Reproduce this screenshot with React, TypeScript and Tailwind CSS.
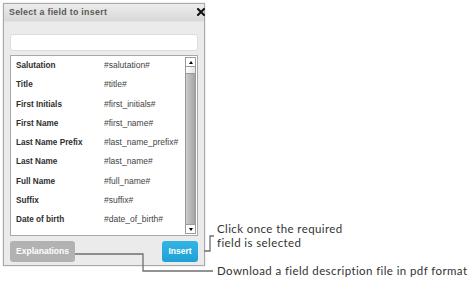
import { useState } from 'react';

const fields = [
  { label: 'Salutation', code: '#salutation#' },
  { label: 'Title', code: '#title#' },
  { label: 'First Initials', code: '#first_initials#' },
  { label: 'First Name', code: '#first_name#' },
  { label: 'Last Name Prefix', code: '#last_name_prefix#' },
  { label: 'Last Name', code: '#last_name#' },
  { label: 'Full Name', code: '#full_name#' },
  { label: 'Suffix', code: '#suffix#' },
  { label: 'Date of birth', code: '#date_of_birth#' },
  { label: 'Gender', code: '#gender#' },
];

const App = () => {
  const [query, setQuery] = useState('');

  return (
    <div className="relative w-[474px] h-[283px] bg-white overflow-hidden font-['Liberation_Sans',Arial,sans-serif]">
      <div className="flex pt-[3px] pl-[3px]">
        {/* ── Dialog ── */}
        <div className="relative w-[202px] h-[263px] shrink-0 flex flex-col bg-[#ebebeb] border border-[#a8a8a8] shadow-[0_0_2px_rgba(0,0,0,0.15)]">
          {/* Title bar */}
          <div className="h-[18px] flex items-center px-[5px] bg-gradient-to-b from-[#ececec] to-[#d8d8d8] border-b border-[#e2e2e2]">
            <span className="text-[8.8px] font-bold text-[#595959] tracking-[0.3px]">Select a field to insert</span>
          </div>
          <svg className="absolute right-[-1px] top-[4px]" width="8" height="8" viewBox="0 0 8 8">
            <path d="M1 1L7 7M7 1L1 7" stroke="#111" strokeWidth="2" strokeLinecap="square" />
          </svg>

          {/* Body */}
          <div className="flex-1 flex flex-col px-[6px] pt-[12px]">
            <input
              value={query}
              onChange={(e) => setQuery(e.target.value)}
              className="h-[17px] w-full bg-white border border-[#dcdcdc] rounded-[3px] outline-none text-[9px] px-1"
            />

            <div className="mt-[4px] h-[181px] flex bg-white border border-[#a9a9a9] overflow-hidden">
              <div className="flex-1 flex flex-col pl-[5px]">
                {fields.map((f) => (
                  <div key={f.label} className="h-[19.3px] shrink-0 flex items-baseline leading-[19.3px]">
                    <span className="w-[88px] text-[8.2px] font-bold text-[#2e2e2e]">{f.label}</span>
                    <span className="text-[8.5px] text-[#444]">{f.code}</span>
                  </div>
                ))}
              </div>

              {/* Scrollbar */}
              <div className="w-[11px] mr-[1px] my-[1px] flex flex-col border border-[#9a9a9a] bg-gradient-to-r from-[#cdcdcd] via-[#b8b8b8] to-[#a2a2a2]">
                <div className="h-[9px] flex items-center justify-center bg-white border-b border-[#9a9a9a]">
                  <div className="w-0 h-0 border-l-[2.5px] border-r-[2.5px] border-b-[3px] border-l-transparent border-r-transparent border-b-black" />
                </div>
                <div className="h-[7px] bg-gradient-to-r from-white to-[#e4e4e4] border-b border-[#9a9a9a]" />
                <div className="flex-1" />
                <div className="h-[9px] flex items-center justify-center bg-white border-t border-[#9a9a9a]">
                  <div className="w-0 h-0 border-l-[2.5px] border-r-[2.5px] border-t-[3px] border-l-transparent border-r-transparent border-t-black" />
                </div>
              </div>
            </div>

            {/* Buttons */}
            <div className="mt-[5px] flex justify-between">
              <button className="h-[21px] w-[65px] rounded-[3px] bg-[#b2b2b2] text-white text-[8.5px] font-bold">
                Explanations
              </button>
              <button className="h-[21px] w-[36px] rounded-[3px] bg-gradient-to-b from-[#33b4e6] to-[#1fa0d6] text-white text-[8.5px] font-bold">
                Insert
              </button>
            </div>
          </div>
        </div>

        {/* ── Annotations ── */}
        <div className="ml-[12px] flex flex-col font-['Lato',sans-serif] text-[11.5px] tracking-[0.4px] text-[#333] leading-[14px]">
          <div className="mt-[219px]">
            <div>Click once the required</div>
            <div>field is selected</div>
          </div>
          <div className="mt-[14px] whitespace-nowrap">Download a field description file in pdf format</div>
        </div>
      </div>

      {/* Connector lines */}
      <svg className="absolute inset-0 pointer-events-none" width="474" height="283">
        <path d="M204 251H210V236H214" fill="none" stroke="#6f6f6f" strokeWidth="1.3" />
        <path d="M75 254H143V271H213" fill="none" stroke="#6f6f6f" strokeWidth="1.3" />
      </svg>
    </div>
  );
};

export default App;
